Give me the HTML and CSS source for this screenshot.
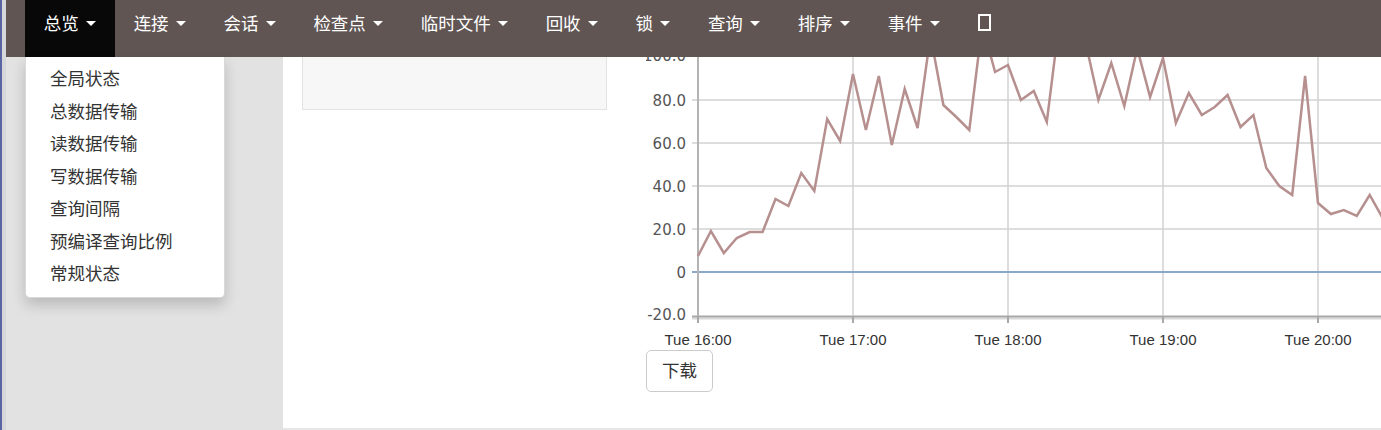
FILE: index.html
```html
<!DOCTYPE html>
<html lang="zh">
<head>
<meta charset="utf-8">
<title>总览</title>
<link rel="stylesheet" href="styles.css">
</head>
<body>
<div class="edge-blue"></div>
<div class="edge-grey"></div>
<div class="app">
  <nav class="navbar">
    <ul class="nav">
      <li class="nav-item active">
        <a class="nav-link">总览 <b class="caret"></b></a>
        <ul class="dropdown">
          <li><a>全局状态</a></li>
          <li><a>总数据传输</a></li>
          <li><a>读数据传输</a></li>
          <li><a>写数据传输</a></li>
          <li><a>查询间隔</a></li>
          <li><a>预编译查询比例</a></li>
          <li><a>常规状态</a></li>
        </ul>
      </li>
      <li class="nav-item"><a class="nav-link">连接 <b class="caret"></b></a></li>
      <li class="nav-item"><a class="nav-link">会话 <b class="caret"></b></a></li>
      <li class="nav-item"><a class="nav-link">检查点 <b class="caret"></b></a></li>
      <li class="nav-item"><a class="nav-link">临时文件 <b class="caret"></b></a></li>
      <li class="nav-item"><a class="nav-link">回收 <b class="caret"></b></a></li>
      <li class="nav-item"><a class="nav-link">锁 <b class="caret"></b></a></li>
      <li class="nav-item"><a class="nav-link">查询 <b class="caret"></b></a></li>
      <li class="nav-item"><a class="nav-link">排序 <b class="caret"></b></a></li>
      <li class="nav-item"><a class="nav-link">事件 <b class="caret"></b></a></li>
      <li class="nav-item"><a class="nav-link"><span class="tofu"></span></a></li>
    </ul>
  </nav>
  <div class="content">
    <aside class="sidebar"></aside>
    <main class="main">
      <div class="well"></div>
      <div class="chart-col">
        <svg class="chart" width="740" height="293" viewBox="0 0 740 293">
          <g class="grid">
            <line x1="46" y1="43" x2="740" y2="43"/>
            <line x1="46" y1="86" x2="740" y2="86"/>
            <line x1="46" y1="129" x2="740" y2="129"/>
            <line x1="46" y1="172" x2="740" y2="172"/>
            <line x1="207" y1="0" x2="207" y2="259"/>
            <line x1="362" y1="0" x2="362" y2="259"/>
            <line x1="517" y1="0" x2="517" y2="259"/>
            <line x1="672" y1="0" x2="672" y2="259"/>
          </g>
          <line class="zero" x1="46" y1="215" x2="740" y2="215"/>
          <line class="yaxis" x1="52" y1="0" x2="52" y2="260"/>
          <line class="xaxis-shadow" x1="46" y1="261.5" x2="740" y2="261.5"/>
          <line class="xaxis" x1="46" y1="259.5" x2="740" y2="259.5"/>
          <g class="ticks">
            <line x1="52" y1="260" x2="52" y2="266"/>
            <line x1="207" y1="260" x2="207" y2="266"/>
            <line x1="362" y1="260" x2="362" y2="266"/>
            <line x1="517" y1="260" x2="517" y2="266"/>
            <line x1="672" y1="260" x2="672" y2="266"/>
          </g>
          <g class="ylabels">
            <text x="40" y="4">100.0</text>
            <text x="40" y="48.5">80.0</text>
            <text x="40" y="91.5">60.0</text>
            <text x="40" y="134.5">40.0</text>
            <text x="40" y="177.5">20.0</text>
            <text x="40" y="220.5">0</text>
            <text x="40" y="263">-20.0</text>
          </g>
          <g class="xlabels">
            <text x="52" y="288">Tue 16:00</text>
            <text x="207" y="288">Tue 17:00</text>
            <text x="362" y="288">Tue 18:00</text>
            <text x="517" y="288">Tue 19:00</text>
            <text x="672" y="288">Tue 20:00</text>
          </g>
          <polyline class="series" points="52,199 64.9,174 77.8,196 90.8,181 103.7,175 116.6,175 129.5,142 142.4,149 155.3,116 168.3,134 181.2,62 194.1,84 207,17 219.9,73 232.8,19 245.8,88 258.7,32 271.6,71 284.5,-21.5 297.4,48 310.3,60 323.3,73 336.2,-32 349.1,15 362,8 374.9,43 387.8,34 400.8,65 413.7,-38.7 426.6,-53.7 439.5,-15 452.4,43 465.3,6 478.3,49 491.2,-8.6 504.1,40 517,1 529.9,66 542.8,36 555.8,58 568.7,50 581.6,38 594.5,70 607.4,58 620.3,111 633.3,129 646.2,138 659.1,19 672,146 684.9,157 697.8,153 710.8,159 723.7,138 736.6,161 749.5,150"/>
        </svg>
        <button class="btn">下载</button>
      </div>
    </main>
  </div>
</div>
</body>
</html>
```
FILE: styles.css
```css
html, body {
  margin: 0;
  padding: 0;
}
body {
  display: flex;
  width: 1381px;
  height: 430px;
  overflow: hidden;
  background: #e6e6e6;
  font-family: "Liberation Sans", "Noto Sans CJK SC", sans-serif;
  font-size: 17.5px;
  color: #333;
}
.edge-blue {
  width: 2px;
  flex-shrink: 0;
  background: #5a64a3;
}
.edge-grey {
  width: 4px;
  flex-shrink: 0;
  background: #d6d7da;
}
.app {
  flex: 1;
  display: flex;
  flex-direction: column;
  min-width: 0;
}
.navbar {
  height: 57px;
  background: #605553;
  flex-shrink: 0;
  position: relative;
  z-index: 10;
}
.nav {
  list-style: none;
  margin: 0;
  padding: 0 0 0 19px;
  display: flex;
  height: 57px;
}
.nav-item {
  position: relative;
}
.nav-link {
  display: block;
  padding: 11.5px 18.75px 20.5px;
  line-height: 25px;
  color: #fff;
  white-space: nowrap;
}
.nav-item.active .nav-link {
  background: #080808;
}
.caret {
  display: inline-block;
  width: 0;
  height: 0;
  margin-left: 2.5px;
  vertical-align: middle;
  border-top: 5px solid #fff;
  border-left: 5px solid transparent;
  border-right: 5px solid transparent;
  position: relative;
  top: -1px;
}
.tofu {
  display: inline-block;
  width: 9px;
  height: 13px;
  border: 2px solid #fff;
  vertical-align: middle;
  position: relative;
  top: -2px;
}
.dropdown {
  position: absolute;
  top: 100%;
  left: 0;
  width: 200px;
  box-sizing: border-box;
  margin: 0;
  padding: 6.25px 0;
  list-style: none;
  background: #fff;
  border: 1px solid rgba(0, 0, 0, 0.15);
  border-top: 0;
  border-radius: 0 0 5px 5px;
  box-shadow: 0 7px 14px rgba(0, 0, 0, 0.18);
}
.dropdown a {
  display: block;
  padding: 3.75px 24px;
  line-height: 25px;
  color: #333;
  white-space: nowrap;
}
.content {
  flex: 1;
  display: flex;
  align-items: flex-start;
  min-height: 0;
}
.sidebar {
  width: 277px;
  align-self: stretch;
  flex-shrink: 0;
  background: #e2e2e2;
}
.main {
  flex: 1;
  height: 371px;
  background: #fff;
  display: flex;
  align-items: flex-start;
  padding-left: 19px;
  overflow: hidden;
  min-width: 0;
}
.well {
  width: 305px;
  height: 53px;
  box-sizing: border-box;
  flex-shrink: 0;
  background: #f7f7f7;
  border: 1px solid #e3e3e3;
  border-top: 0;
}
.chart-col {
  margin-left: 39px;
  flex-shrink: 0;
  width: 740px;
}
.chart {
  display: block;
  overflow: hidden;
}
.grid line {
  stroke: #d2d2d2;
  stroke-width: 1.5;
}
.zero {
  stroke: #8aa9c8;
  stroke-width: 2;
}
.yaxis {
  stroke: #b4b4b4;
  stroke-width: 2;
}
.xaxis {
  stroke: #a8a8a8;
  stroke-width: 2;
}
.xaxis-shadow {
  stroke: #d8d8d8;
  stroke-width: 2;
}
.ticks line {
  stroke: #a8a8a8;
  stroke-width: 2;
}
.ylabels text {
  font-family: "DejaVu Sans", sans-serif;
  font-size: 15px;
  fill: #555;
  text-anchor: end;
}
.xlabels text {
  font-family: "Liberation Sans", sans-serif;
  font-size: 15px;
  fill: #333;
  text-anchor: middle;
}
.series {
  fill: none;
  stroke: #b68f8f;
  stroke-width: 2.5;
  stroke-linejoin: miter;
}
.btn {
  display: block;
  margin-top: 0;
  height: 42px;
  padding: 7.5px 15px;
  font-family: "Liberation Sans", "Noto Sans CJK SC", sans-serif;
  font-size: 17.5px;
  line-height: 25px;
  color: #333;
  background: #fff;
  border: 1px solid #ccc;
  border-radius: 5px;
  box-sizing: border-box;
}
```
